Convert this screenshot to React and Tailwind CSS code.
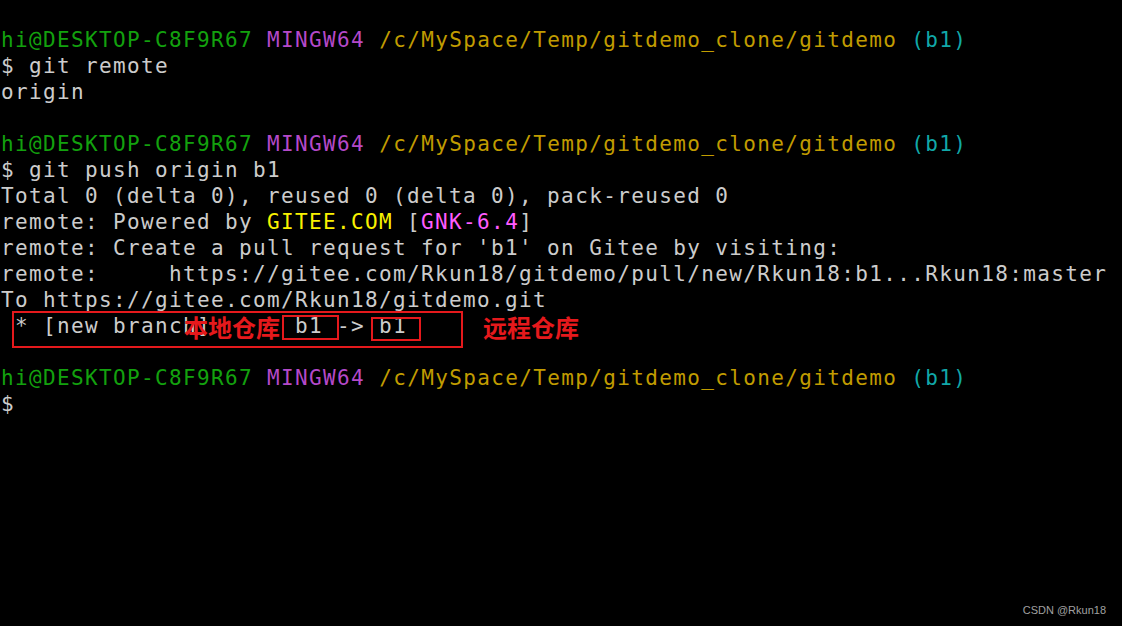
function Prompt() {
  return (
    <div className="h-[26px] leading-[26px] whitespace-pre">
      <span className="text-[#13a10e]">hi@DESKTOP-C8F9R67</span>{" "}
      <span className="text-[#b549c9]">MINGW64</span>{" "}
      <span className="text-[#c19c00]">/c/MySpace/Temp/gitdemo_clone/gitdemo</span>{" "}
      <span className="text-[#11a8a8]">(b1)</span>
    </div>
  );
}

function Line({ children }) {
  return <div className="h-[26px] leading-[26px] whitespace-pre">{children}</div>;
}

export default function App() {
  return (
    <div className="relative w-[1122px] h-[626px] bg-black overflow-hidden">
      <div className="pt-[27px] pl-[1px] font-['DejaVu_Sans_Mono',monospace] text-[21px] tracking-[1.36px] text-[#cccccc]">
        <Prompt />
        <Line>$ git remote</Line>
        <Line>origin</Line>
        <Line> </Line>
        <Prompt />
        <Line>$ git push origin b1</Line>
        <Line>Total 0 (delta 0), reused 0 (delta 0), pack-reused 0</Line>
        <Line>
          remote: Powered by <span className="text-[#f9f100]">GITEE.COM</span> [
          <span className="text-[#ff5cff]">GNK-6.4</span>]
        </Line>
        <Line>remote: Create a pull request for 'b1' on Gitee by visiting:</Line>
        <Line>remote:     https://gitee.com/Rkun18/gitdemo/pull/new/Rkun18:b1...Rkun18:master</Line>
        <Line>To https://gitee.com/Rkun18/gitdemo.git</Line>
        <Line> * [new branch]      b1 -&gt; b1</Line>
        <Line> </Line>
        <Prompt />
        <Line>$</Line>
      </div>

      {/* red annotations drawn over the output */}
      <div className="absolute left-[12px] top-[311px] w-[451px] h-[37px] border-2 border-[#e5191c]" />
      <div className="absolute left-[282px] top-[315px] w-[57px] h-[25px] border-2 border-[#e5191c]" />
      <div className="absolute left-[371px] top-[317px] w-[50px] h-[24px] border-2 border-[#e5191c]" />
      <div className="absolute left-[184px] top-[312px] leading-[30px] text-[24px] font-bold text-[#e5191c] font-['Noto_Sans_CJK_SC',sans-serif]">
        本地仓库
      </div>
      <div className="absolute left-[483px] top-[312px] leading-[30px] text-[24px] font-bold text-[#e5191c] font-['Noto_Sans_CJK_SC',sans-serif]">
        远程仓库
      </div>

      <div className="absolute right-[16px] bottom-[8px] text-[11px] text-[#a0a0a0] font-['Liberation_Sans',sans-serif]">
        CSDN @Rkun18
      </div>
    </div>
  );
}
